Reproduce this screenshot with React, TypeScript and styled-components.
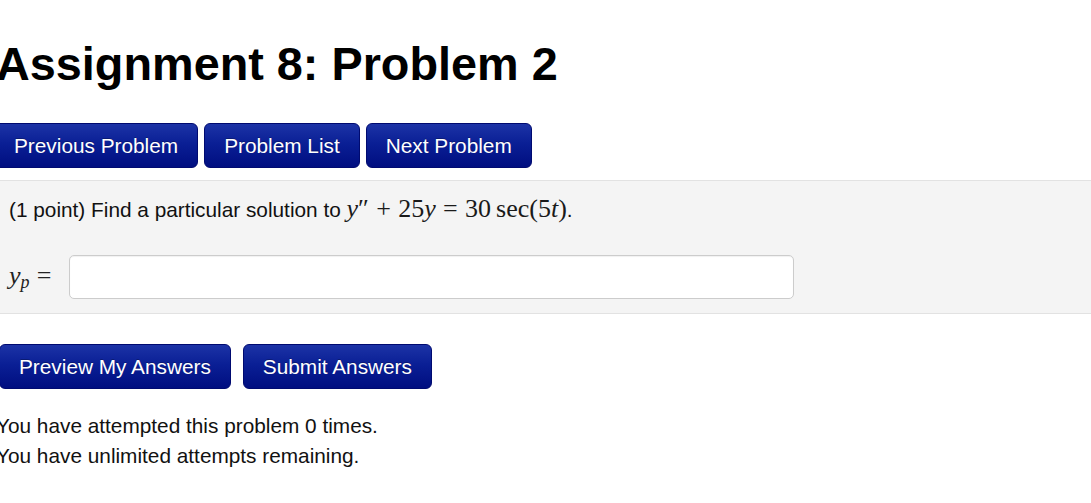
import styled, { createGlobalStyle } from 'styled-components';

// GLOBAL

const GlobalStyle = createGlobalStyle`
    html, body {
        margin: 0;
        padding: 0;
        background: #ffffff;
    }
    body {
        font-family: "Liberation Sans", Arial, sans-serif;
        font-size: 20.8px;
        line-height: 30px;
        color: #111111;
    }
`;

// STYLE

const Page = styled.div`
    margin-left: -4px;
    padding-top: 31px;
`;

const Title = styled.h1`
    margin: 0 0 26px 0;
    font-size: 46.8px;
    line-height: 66px;
    font-weight: bold;
    color: #000000;
`;

const ButtonRow = styled.div<{ $gap: number; $shift: number }>`
    display: flex;
    gap: ${props => props.$gap}px;
    margin-left: ${props => props.$shift}px;
`;

const NavButton = styled.button`
    height: 45px;
    padding: 0 19px;
    font-family: "Liberation Sans", Arial, sans-serif;
    font-size: 20.8px;
    color: #ffffff;
    background: linear-gradient(to bottom, #1c33a6 0%, #0a1f95 45%, #000e80 100%);
    border: 1px solid #000a70;
    border-radius: 6px;
    text-shadow: 0 -1px 0 rgba(0, 0, 0, 0.25);
    cursor: pointer;
`;

const ProblemBox = styled.div`
    margin-top: 12px;
    padding: 13px 0 14px 13px;
    background: #f4f4f4;
    border-top: 1px solid #e2e2e2;
    border-bottom: 1px solid #e2e2e2;
`;

const Statement = styled.div`
    line-height: 30px;
`;

const Math = styled.span`
    font-family: "Liberation Serif", "Times New Roman", serif;
    font-size: 26px;
    color: #1a1a1a;
`;

const Var = styled.i`
    font-family: "Liberation Serif", "Times New Roman", serif;
`;

const Sub = styled.i`
    font-family: "Liberation Serif", "Times New Roman", serif;
    font-size: 18px;
    position: relative;
    top: 4px;
`;

const Op = styled.span`
    margin: 0 0.28em;
`;

const AnswerRow = styled.div`
    display: flex;
    align-items: center;
    gap: 8px;
    margin-top: 30px;
`;

const AnswerLabel = styled.span`
    font-family: "Liberation Serif", "Times New Roman", serif;
    font-size: 26px;
    width: 52px;
    color: #222222;
`;

const AnswerInput = styled.input`
    width: 725px;
    height: 44px;
    box-sizing: border-box;
    padding: 4px 8px;
    font-size: 20.8px;
    background: #ffffff;
    border: 1px solid #cccccc;
    border-radius: 5px;
    box-shadow: inset 0 1px 1px rgba(0, 0, 0, 0.06);
`;

const Actions = styled.div`
    margin-top: 30px;
`;

const Attempts = styled.div`
    margin-top: 22px;
    color: #111111;
`;

const App = () => (
    <Page>
        <GlobalStyle />
        <Title>Assignment 8: Problem 2</Title>

        <ButtonRow $gap={6} $shift={-2}>
            <NavButton>Previous Problem</NavButton>
            <NavButton>Problem List</NavButton>
            <NavButton>Next Problem</NavButton>
        </ButtonRow>

        <ProblemBox>
            <Statement>
                (1 point) Find a particular solution to{' '}
                <Math>
                    <Var>y</Var>&#8243;<Op>+</Op>25<Var>y</Var><Op>=</Op>30&thinsp;sec(5<Var>t</Var>)
                </Math>.
            </Statement>
            <AnswerRow>
                <AnswerLabel>
                    <Var>y</Var><Sub>p</Sub><Op>=</Op>
                </AnswerLabel>
                <AnswerInput type="text" />
            </AnswerRow>
        </ProblemBox>

        <Actions>
            <ButtonRow $gap={12} $shift={3}>
                <NavButton>Preview My Answers</NavButton>
                <NavButton>Submit Answers</NavButton>
            </ButtonRow>
        </Actions>

        <Attempts>
            You have attempted this problem 0 times.<br />
            You have unlimited attempts remaining.
        </Attempts>
    </Page>
);

export default App;
